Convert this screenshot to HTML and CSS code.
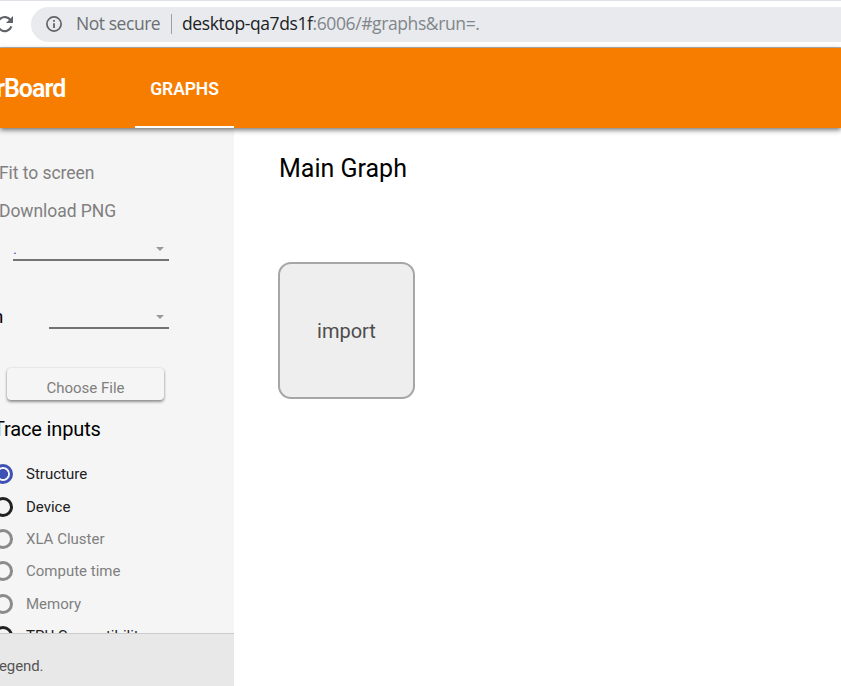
FILE: index.html
```html
<!DOCTYPE html>
<html lang="en">
<head>
    <meta charset="UTF-8">
    <title>TensorBoard</title>
    <link rel="stylesheet" href="styles.css">
</head>
<body>
    <div class="browser-bar">
        <svg class="reload" width="20" height="20" viewBox="0 0 20 20">
            <path d="M15.6 6.2A7 7 0 1 0 16.4 12.3" fill="none" stroke="#5f6368" stroke-width="2.1"/>
            <path d="M18 2v7h-7z" fill="#5f6368"/>
        </svg>
        <div class="address">
            <svg class="info" width="16" height="16" viewBox="0 0 16 16">
                <circle cx="8" cy="8" r="7.1" fill="none" stroke="#5f6368" stroke-width="1.7"/>
                <path d="M7.1 7.2h1.8v4.8H7.1zM7.1 4h1.8v1.8H7.1z" fill="#5f6368"/>
            </svg>
            <span class="secure">Not secure</span>
            <span class="divider"></span>
            <span class="url">desktop-qa7ds1f<span class="path">:6006/#graphs&amp;run=.</span></span>
        </div>
    </div>

    <header class="toolbar">
        <div class="brand">rBoard</div>
        <div class="tab">GRAPHS</div>
    </header>

    <div class="content">
        <aside class="sidebar">
            <div class="controls">
                <div class="action">Fit to screen</div>
                <div class="action">Download PNG</div>
                <div class="select run"><span>.</span><i class="arrow"></i></div>
                <div class="tag-row">
                    <span class="tag-label">n</span>
                    <div class="select"><i class="arrow"></i></div>
                </div>
                <button class="upload">Choose File</button>
                <div class="trace">Trace inputs</div>
                <div class="radios">
                    <div class="radio checked"><i class="circle"></i><span>Structure</span></div>
                    <div class="radio"><i class="circle"></i><span>Device</span></div>
                    <div class="radio disabled"><i class="circle"></i><span>XLA Cluster</span></div>
                    <div class="radio disabled"><i class="circle"></i><span>Compute time</span></div>
                    <div class="radio disabled"><i class="circle"></i><span>Memory</span></div>
                    <div class="radio"><i class="circle"></i><span>TPU Compatibility</span></div>
                </div>
            </div>
            <div class="legend">egend.</div>
        </aside>
        <main class="graph">
            <h1>Main Graph</h1>
            <div class="node">import</div>
        </main>
    </div>
</body>
</html>
```
FILE: styles.css
```css
* {
    box-sizing: border-box;
}
body {
    margin: 0;
    height: 686px;
    overflow: hidden;
    display: flex;
    flex-direction: column;
    font-family: Roboto, sans-serif;
    background: #fff;
    color: #000;
}
.browser-bar {
    flex: none;
    height: 48px;
    display: flex;
    align-items: center;
    border-top: 1px solid #dee1e6;
    border-bottom: 1px solid #b6b4b1;
    font-family: "Open Sans", sans-serif;
    font-size: 17.5px;
}
.reload {
    flex: none;
    margin-left: -5px;
}
.address {
    flex: 1;
    height: 35px;
    margin-left: 16px;
    padding-left: 15px;
    display: flex;
    align-items: center;
    background: #e8eaed;
    border-radius: 18px 0 0 18px;
    white-space: nowrap;
}
.info {
    flex: none;
}
.secure {
    width: 84px;
    margin-left: 14px;
    padding-bottom: 2px;
    color: #6b6f74;
    letter-spacing: -0.45px;
}
.divider {
    width: 1px;
    height: 20px;
    margin: 0 10px 0 11px;
    background: #9aa0a6;
}
.url {
    padding-bottom: 2px;
    color: #202124;
    letter-spacing: -0.4px;
}
.path {
    color: #80868b;
}

.toolbar {
    flex: none;
    position: relative;
    z-index: 1;
    height: 80px;
    display: flex;
    align-items: center;
    background: #f77d00;
    color: #fff;
    box-shadow: 0 2px 5px rgba(0, 0, 0, 0.55);
}
.brand {
    width: 139px;
    margin-left: -4px;
    font-size: 25px;
    font-weight: 600;
    letter-spacing: -1px;
}
.tab {
    width: 99px;
    height: 80px;
    line-height: 82px;
    text-align: center;
    font-size: 17.5px;
    font-weight: 600;
    letter-spacing: -0.1px;
    border-bottom: 2px solid #fff;
}

.content {
    flex: 1;
    min-height: 0;
    display: flex;
}
.sidebar {
    width: 234px;
    display: flex;
    flex-direction: column;
    background: #f5f5f5;
}
.controls {
    flex: 1;
    min-height: 0;
    padding-top: 26px;
    overflow: hidden;
}
.action {
    height: 38px;
    margin-left: -1px;
    line-height: 38px;
    font-size: 17.5px;
    letter-spacing: -0.05px;
    color: #808080;
}
.select {
    width: 120px;
    height: 24px;
    padding: 2px 5px 0 0;
    display: flex;
    justify-content: flex-end;
    align-items: center;
    border-bottom: 2px solid #737373;
    font-size: 15px;
    color: #3f51b5;
}
.select.run {
    width: 156px;
    margin: 7px 0 0 13px;
    justify-content: space-between;
}
.arrow {
    border: 4px solid transparent;
    border-top-color: #999;
    border-bottom: 0;
}
.tag-row {
    height: 24px;
    margin-top: 44px;
    display: flex;
    justify-content: space-between;
    padding-right: 65px;
}
.tag-label {
    margin-left: -7px;
    font-size: 18.75px;
    line-height: 25px;
}
.upload {
    display: block;
    width: 157px;
    height: 32px;
    margin: 39px 0 0 7px;
    padding: 8px 0 0;
    border: 0;
    border-radius: 4px;
    background: #f5f5f5;
    box-shadow: 0 2px 3px rgba(0, 0, 0, 0.4), 0 0 2px rgba(0, 0, 0, 0.16);
    font-family: inherit;
    font-size: 15px;
    color: #808080;
}
.trace {
    height: 30px;
    margin: 14px 0 0 -7px;
    line-height: 30px;
    font-size: 20px;
    letter-spacing: -0.15px;
}
.radios {
    margin-top: 14px;
}
.radio {
    height: 32.4px;
    margin-left: -7px;
    display: flex;
    align-items: center;
    gap: 13px;
    font-size: 15px;
    color: #212121;
}
.circle {
    width: 20px;
    height: 20px;
    border: 3px solid #212121;
    border-radius: 50%;
}
.checked .circle {
    border-color: #3f51b5;
    background: radial-gradient(circle, #3f51b5 4.7px, transparent 5.3px);
}
.disabled {
    color: #808080;
}
.disabled .circle {
    border-color: #8b8b8b;
}
.legend {
    height: 53px;
    padding-top: 11px;
    border-top: 1px solid #ccc;
    background: #e8e8e8;
    line-height: 42px;
    font-size: 15px;
    text-indent: -1px;
    letter-spacing: -0.1px;
    color: #555;
}
.graph {
    flex: 1;
    padding: 26px 0 0 45px;
}
h1 {
    margin: 0;
    height: 30px;
    line-height: 30px;
    font-size: 25px;
    font-weight: 400;
}
.node {
    width: 137px;
    height: 137px;
    margin: 78px 0 0 -1px;
    line-height: 134px;
    text-align: center;
    background: #eee;
    border: 2px solid #a6a6a6;
    border-radius: 13px;
    font-size: 20px;
    color: #4d4d4d;
}
```
